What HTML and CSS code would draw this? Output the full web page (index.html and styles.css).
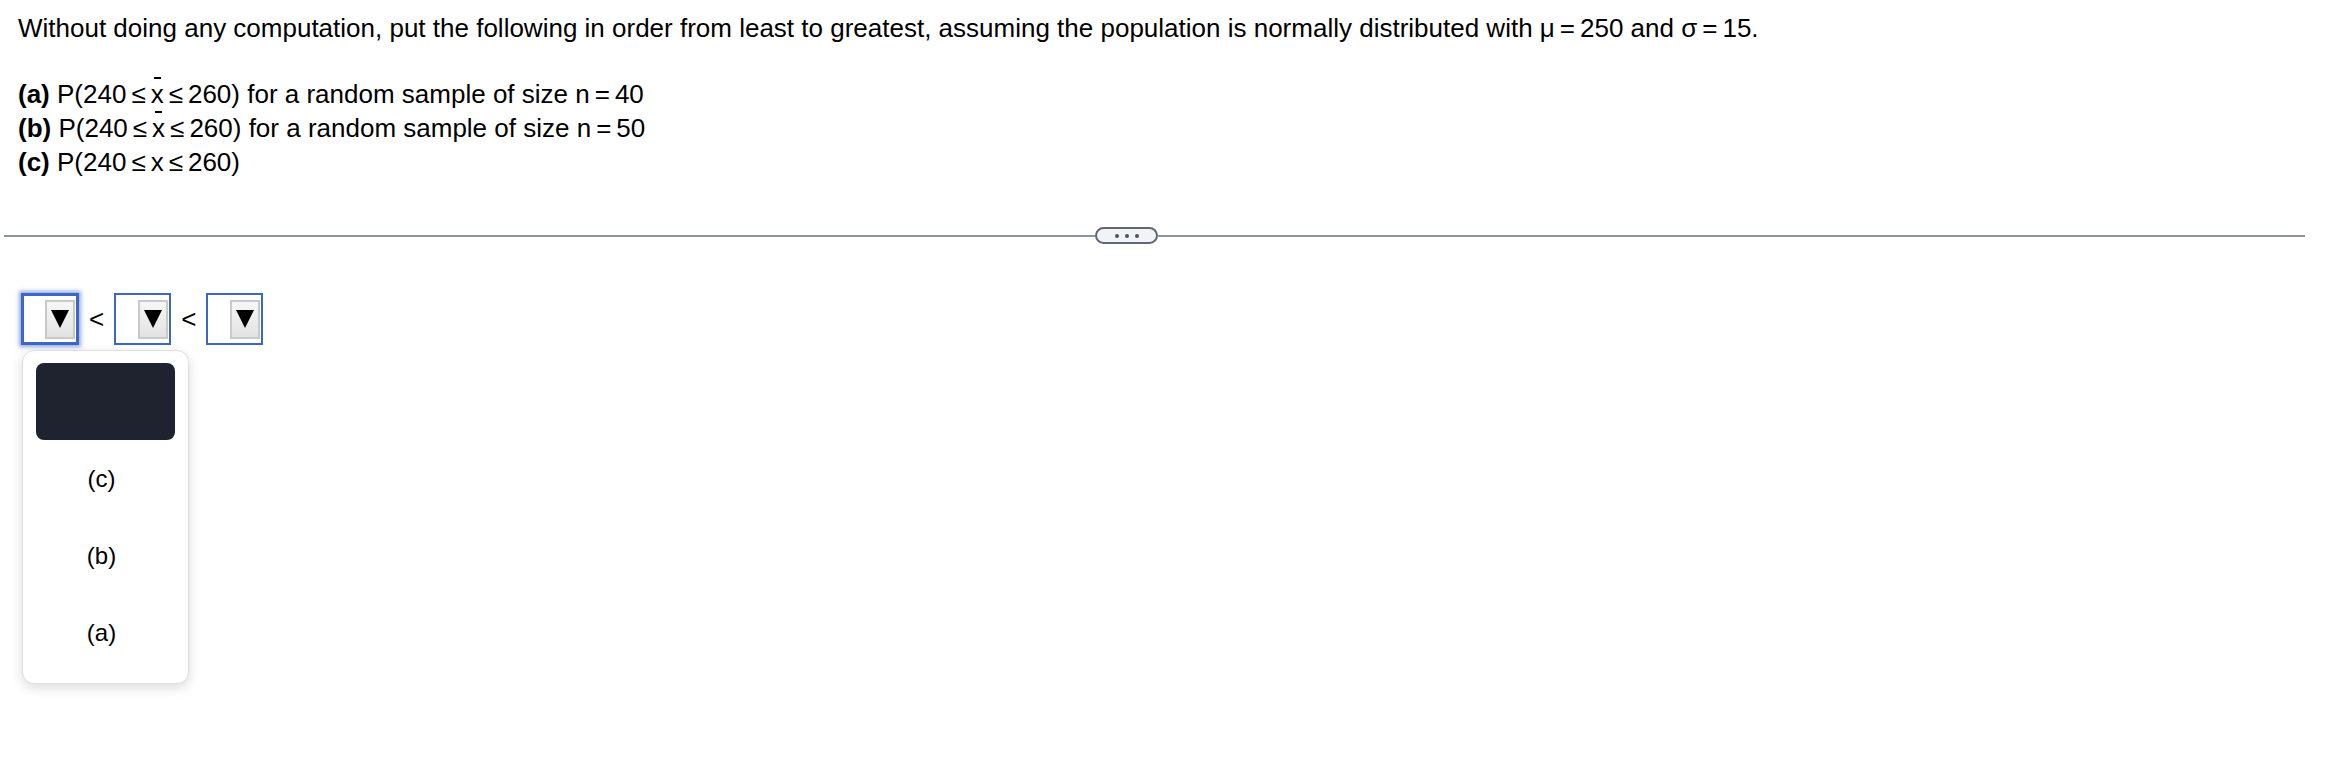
FILE: index.html
```html
<!DOCTYPE html>
<html lang="en">

<head>
    <meta charset="UTF-8">
    <meta name="viewport" content="width=device-width, initial-scale=1.0">
    <title>order the probabilities</title>
    <link rel="stylesheet" href="styles.css">
</head>

<body>

    <p class="prompt">Without doing any computation, put the following in order from least to greatest, assuming the population is normally distributed with μ<span class="rel">=</span>250 and σ<span class="rel">=</span>15.</p>

    <div class="parts">
        <div class="part"><b>(a)</b> P(240<span class="rel">≤</span><span class="xbar">x</span><span class="rel">≤</span>260) for a random sample of size n<span class="rel">=</span>40</div>
        <div class="part"><b>(b)</b> P(240<span class="rel">≤</span><span class="xbar">x</span><span class="rel">≤</span>260) for a random sample of size n<span class="rel">=</span>50</div>
        <div class="part"><b>(c)</b> P(240<span class="rel">≤</span>x<span class="rel">≤</span>260)</div>
    </div>

    <div class="divider">
        <div class="rule left"></div>
        <div class="pill"><i></i><i></i><i></i></div>
        <div class="rule right"></div>
    </div>

    <div class="answer">
        <div class="pick">
            <div class="pickBox focused">
                <span class="arrowBtn"><svg width="18" height="18" viewBox="0 0 18 18"><polygon points="0,0 18,0 9,18" fill="#000"/></svg></span>
            </div>
            <div class="choices">
                <div class="choice active"></div>
                <div class="choice">(c)</div>
                <div class="choice">(b)</div>
                <div class="choice">(a)</div>
            </div>
        </div>
        <span class="lt">&lt;</span>
        <div class="pick">
            <div class="pickBox">
                <span class="arrowBtn"><svg width="18" height="18" viewBox="0 0 18 18"><polygon points="0,0 18,0 9,18" fill="#000"/></svg></span>
            </div>
        </div>
        <span class="lt">&lt;</span>
        <div class="pick">
            <div class="pickBox">
                <span class="arrowBtn"><svg width="18" height="18" viewBox="0 0 18 18"><polygon points="0,0 18,0 9,18" fill="#000"/></svg></span>
            </div>
        </div>
    </div>

</body>

</html>
```

FILE: styles.css
```css
* {
    margin: 0;
    padding: 0;
    box-sizing: border-box;
}

html,
body {
    min-height: 100vh;
}

body {
    font-family: "Liberation Sans", Arial, sans-serif;
    font-size: 26px;
    line-height: 33px;
    color: #000;
    background: #fff;
}

.prompt {
    padding: 12px 18px 0;
}

.parts {
    margin-top: 32px;
    padding-left: 18px;
    line-height: 34px;
}

.rel {
    padding: 0 5px;
}

.xbar {
    position: relative;
}

.xbar::before {
    content: "";
    position: absolute;
    left: 3px;
    right: 3px;
    top: -2px;
    height: 2px;
    background: #000;
}

.divider {
    display: flex;
    align-items: center;
    margin: 48px 20px 0 4px;
}

.rule {
    height: 2px;
    background: #8d95a3;
}

.rule.left {
    flex: 1091 1 0;
}

.rule.right {
    flex: 1147 1 0;
}

.pill {
    width: 63px;
    height: 17px;
    border: 2px solid #5f6878;
    border-radius: 9px;
    background: #f2f3f5;
    display: flex;
    align-items: center;
    justify-content: center;
    gap: 6px;
}

.pill i {
    width: 4px;
    height: 4px;
    border-radius: 50%;
    background: #4b5261;
}

.answer {
    display: flex;
    align-items: center;
    gap: 10px;
    margin-top: 49px;
    padding-left: 21px;
}

.pick {
    position: relative;
}

.pickBox {
    width: 57px;
    height: 52px;
    border: 2px solid #3d67c7;
    background: #fff;
    display: flex;
    align-items: center;
    justify-content: flex-end;
    padding-right: 1px;
}

.pickBox.focused {
    width: 58px;
    border-width: 3px;
    box-shadow: 0 0 4px 2px rgba(61, 103, 199, 0.55);
}

.arrowBtn {
    width: 30px;
    height: 39px;
    border: 2px solid #c9c9c9;
    background: linear-gradient(#f7f7f7, #e2e2e2);
    display: flex;
    align-items: center;
    justify-content: center;
}

.arrowBtn svg {
    display: block;
}

.lt {
    font-size: 26px;
}

.choices {
    position: absolute;
    top: 57px;
    left: 1px;
    z-index: 5;
    width: 167px;
    padding: 12px 13px;
    background: #fff;
    border: 1px solid #dedede;
    border-radius: 12px;
    box-shadow: 0 4px 12px rgba(0, 0, 0, 0.14);
}

.choice {
    height: 77px;
    display: flex;
    align-items: center;
    justify-content: center;
    padding-right: 8px;
    font-size: 24px;
}

.choice.active {
    background: #1f2330;
    border-radius: 8px;
}
```
